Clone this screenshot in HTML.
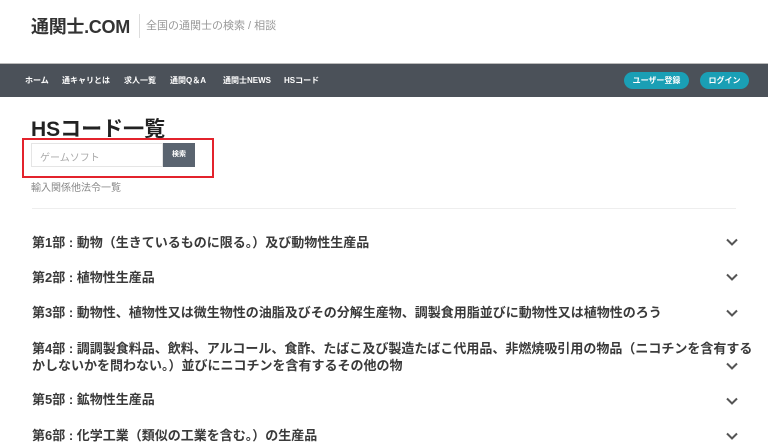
<!DOCTYPE html>
<html><head><meta charset="utf-8"><style>
*{margin:0;padding:0;box-sizing:border-box}
body{width:768px;height:440px;overflow:hidden;background:#fff;font-family:"Liberation Sans","Noto Sans CJK JP",sans-serif;color:#333;position:relative}
.a{position:absolute;white-space:nowrap}
.logo{left:31px;top:13px;font-size:18px;font-weight:bold;color:#333;letter-spacing:-0.3px}
.vl{left:139px;top:14px;width:1px;height:24px;background:#ddd}
.tag{left:146px;top:17px;font-size:11px;color:#999}
.nav{left:0;top:63px;width:768px;height:34px;background:#4b5159;border-top:1px solid #bbb}
.nav span{position:absolute;top:11px;font-size:8px;font-weight:bold;color:#fff}
.btn{position:absolute;top:8px;height:17px;border-radius:9px;background:#1a9fb5;color:#fff;font-size:8px;font-weight:bold;text-align:center;line-height:17px}
h1{position:absolute;left:31px;top:113px;font-size:21px;font-weight:bold;color:#222}
.red{left:22px;top:138px;width:192px;height:40px;border:2px solid #e3232c}
.inp{left:31px;top:143px;width:132px;height:24px;border:1px solid #e5e5e5;font-size:10px;color:#aaa;padding:5px 8px}
.sb{left:163px;top:143px;width:32px;height:24px;background:#5a6470;color:#fff;font-size:7px;font-weight:bold;text-align:center;line-height:24px}
.link{left:31px;top:179px;font-size:10px;color:#888}
.hr{left:32px;top:208px;width:704px;height:1px;background:#eee}
.r{position:absolute;left:32px;font-size:13px;font-weight:bold;color:#3a3a3a;line-height:17px;white-space:nowrap}
.ch{position:absolute;left:726px;width:12px;height:8px}
</style></head><body>
<div class="a logo">通関士.COM</div>
<div class="a vl"></div>
<div class="a tag">全国の通関士の検索 / 相談</div>
<div class="a nav">
<span style="left:25px">ホーム</span>
<span style="left:62px">通キャリとは</span>
<span style="left:124px">求人一覧</span>
<span style="left:170px">通関Q＆A</span>
<span style="left:223px">通関士NEWS</span>
<span style="left:284px">HSコード</span>
<div class="btn" style="left:624px;width:65px">ユーザー登録</div>
<div class="btn" style="left:700px;width:49px">ログイン</div>
</div>
<h1>HSコード一覧</h1>
<div class="a red"></div>
<div class="a inp">ゲームソフト</div>
<div class="a sb">検索</div>
<div class="a link">輸入関係他法令一覧</div>
<div class="a hr"></div>
<div class="r" style="top:234px">第1部 : 動物（生きているものに限る。）及び動物性生産品</div>
<div class="r" style="top:269px">第2部 : 植物性生産品</div>
<div class="r" style="top:304px">第3部 : 動物性、植物性又は微生物性の油脂及びその分解生産物、調製食用脂並びに動物性又は植物性のろう</div>
<div class="r" style="top:340px">第4部 : 調調製食料品、飲料、アルコール、食酢、たばこ及び製造たばこ代用品、非燃焼吸引用の物品（ニコチンを含有する<br>かしないかを問わない。）並びにニコチンを含有するその他の物</div>
<div class="r" style="top:391px">第5部 : 鉱物性生産品</div>
<div class="r" style="top:427px">第6部 : 化学工業（類似の工業を含む。）の生産品</div>
<svg class="ch" style="top:238px" viewBox="0 0 12 8"><path d="M1 1.5L6 6.5L11 1.5" fill="none" stroke="#555" stroke-width="2"/></svg>
<svg class="ch" style="top:273px" viewBox="0 0 12 8"><path d="M1 1.5L6 6.5L11 1.5" fill="none" stroke="#555" stroke-width="2"/></svg>
<svg class="ch" style="top:309px" viewBox="0 0 12 8"><path d="M1 1.5L6 6.5L11 1.5" fill="none" stroke="#555" stroke-width="2"/></svg>
<svg class="ch" style="top:362px" viewBox="0 0 12 8"><path d="M1 1.5L6 6.5L11 1.5" fill="none" stroke="#555" stroke-width="2"/></svg>
<svg class="ch" style="top:397px" viewBox="0 0 12 8"><path d="M1 1.5L6 6.5L11 1.5" fill="none" stroke="#555" stroke-width="2"/></svg>
<svg class="ch" style="top:432px" viewBox="0 0 12 8"><path d="M1 1.5L6 6.5L11 1.5" fill="none" stroke="#555" stroke-width="2"/></svg>
</body></html>
